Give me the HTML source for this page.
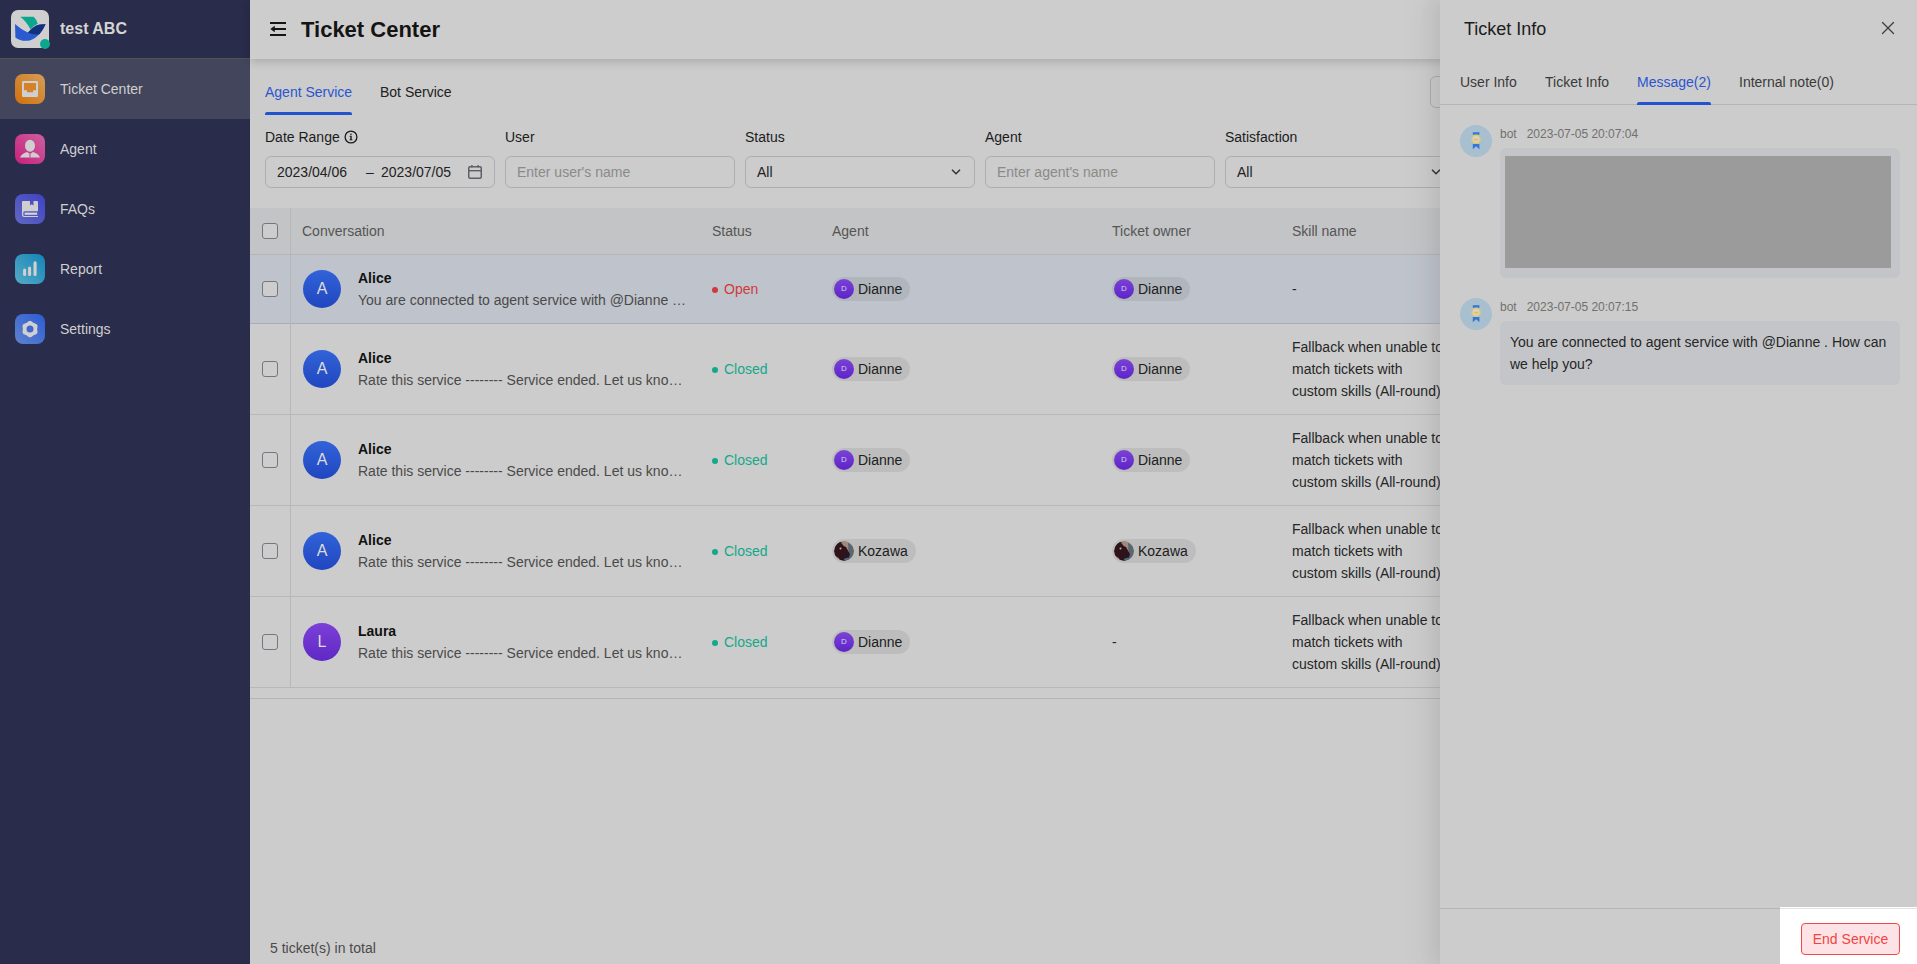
<!DOCTYPE html>
<html><head><meta charset="utf-8">
<style>
*{box-sizing:border-box;margin:0;padding:0}
html,body{width:1917px;height:964px;overflow:hidden;font-family:"Liberation Sans",sans-serif;background:#cccccc;position:relative}
.abs{position:absolute}
#side{position:absolute;left:0;top:0;width:250px;height:964px;background:#292c4a}
#logo{position:absolute;left:11px;top:10px;width:38px;height:38px;border-radius:7px;background:#cfcfcf}
#logodot{position:absolute;left:40px;top:39px;width:10px;height:10px;border-radius:50%;background:#0aa88f}
#brand{position:absolute;left:60px;top:19px;font-size:16px;font-weight:bold;color:#d4d4d4;line-height:20px}
.mi{position:absolute;left:0;width:250px;height:60px}
.mi.act{background:#43455c}
.mi .ic{position:absolute;left:15px;top:15px;width:30px;height:30px;border-radius:8px}
.mi .tx{position:absolute;left:60px;top:22px;font-size:14px;color:#cfcfcf;line-height:16px}
#main{position:absolute;left:250px;top:0;width:1667px;height:964px;background:#cccccc}
#hdr{position:absolute;left:0;top:0;width:1667px;height:59px;background:#cdcdcd;box-shadow:0 3px 9px rgba(0,0,0,0.16)}
#title{position:absolute;left:51px;top:17px;font-size:22px;font-weight:bold;color:#141414;line-height:26px}
.tab{position:absolute;top:84px;font-size:14px;line-height:16px;color:#202020}
.lbl{position:absolute;top:129px;font-size:14px;line-height:16px;color:#1c1c1c}
.inp{position:absolute;top:156px;width:230px;height:32px;border:1px solid #abaeb2;border-radius:6px;background:#cccccc;font-size:14px;line-height:30px;padding-left:11px;color:#8a8a8a}
.inp.v{color:#222}
#thead{position:absolute;left:0;top:208px;width:1190px;height:47px;background:#c3c4c6;border-bottom:1px solid #b5b5b7}
.th{position:absolute;top:15px;font-size:14px;line-height:16px;color:#555}
.cb{position:absolute;width:16px;height:16px;border:1px solid #737880;border-radius:3px;background:#cdcdcd}
.row{position:absolute;left:0;width:1190px;border-bottom:1px solid #b8b8b8}
.row.sel{background:#bfc3cb;border-bottom-color:#a9adb5}
.vdiv{position:absolute;left:40px;top:208px;width:1px;height:479px;background:#b6b7b9}
.av{position:absolute;width:38px;height:38px;border-radius:50%;color:#dcdcdc;font-size:16px;text-align:center;line-height:38px}
.av.b{background:linear-gradient(#3263d8,#2046c0)}
.av.p{background:linear-gradient(#7c40d8,#5f28c4)}
.nm{position:absolute;left:108px;font-size:14px;font-weight:bold;color:#111;line-height:16px}
.msg{position:absolute;left:108px;font-size:14px;color:#4a4a4a;line-height:16px;white-space:nowrap}
.st{position:absolute;left:462px;font-size:14px;line-height:16px}
.st i{display:inline-block;width:6px;height:6px;border-radius:50%;margin-right:6px;vertical-align:1px}
.chip{position:absolute;height:24px;border-radius:12px;background:rgba(0,0,0,0.07);padding:0 8px 0 26px;font-size:14px;line-height:24px;color:#202020}
.chip .ca{position:absolute;left:2px;top:2px;width:20px;height:20px;border-radius:50%;background:linear-gradient(#7a42d6,#5e24c8);color:#d8d0f0;font-size:8px;line-height:20px;text-align:center}
.chip .ca.k{background:none;overflow:hidden}.chip .ca svg{display:block}
.skill{position:absolute;left:1042px;font-size:14px;line-height:22px;color:#262626;white-space:nowrap}
#drawer{position:absolute;left:1440px;top:0;width:477px;height:964px;background:#cccccc;box-shadow:-6px 0 16px 0 rgba(0,0,0,.06),-9px 0 28px 8px rgba(0,0,0,.04)}
.dtab{position:absolute;top:74px;font-size:14px;line-height:16px;color:#3a3a3a}
.botav{position:absolute;left:20px;width:32px;height:32px;border-radius:50%}.botav svg{display:block}
.meta{position:absolute;left:60px;font-size:12px;line-height:14px;color:#707070}
</style></head><body>
<div id="side">
  <div id="logo"><svg width="38" height="38" viewBox="0 0 38 38">
<path d="M9.3 6.8 L22.7 6.8 Q25.5 9.5 26.8 13.8 Q22 15.8 19.5 19.5 Q15.5 11.5 9.3 6.8Z" fill="#0aa68e"/>
<path d="M4 14 Q10 19.5 16.8 22.4 Q21 20 24 16.5 Q29 14 34.6 14.3 Q31.5 21 27.4 25 Q21.5 31 15.5 30.8 Q9 31 4.4 27.4Z" fill="#2a5ad0"/>
<path d="M16.8 22.4 Q21 17.5 25 15.5 Q29.5 13.8 34.6 14.3 Q32 20 28.5 24.2 Q22 25 16.8 22.4Z" fill="#12307c"/>
</svg></div><div id="logodot"></div>
  <div class="abs" style="left:0;top:58px;width:250px;height:1px;background:#525252"></div><div id="brand">test ABC</div>
  <div class="mi act" style="top:59px"><div class="ic" style="background:linear-gradient(45deg,#d0700c,#d59e58)"><svg width="30" height="30" viewBox="0 0 30 30"><rect x="7" y="7" width="16" height="16" rx="1.2" fill="#cfcfcf"/><path d="M9 9H21V16.3H18V18.3H12V16.3H9Z" fill="#d3822a"/></svg></div><div class="tx">Ticket Center</div></div>
  <div class="mi" style="top:119px"><div class="ic" style="background:linear-gradient(45deg,#c8207c,#cc60a0)"><svg width="30" height="30" viewBox="0 0 30 30"><ellipse cx="15" cy="11.8" rx="5" ry="6" fill="#cfcfcf"/><path d="M5 23.6 Q6.5 19.5 12 18 L14.2 19.5 L14.2 23.6Z M25 23.6 Q23.5 19.5 18 18 L15.8 19.5 L15.8 23.6Z" fill="#cfcfcf"/><path d="M14.3 19.6H15.7L15.4 21.5L15.9 23.6H14.1L14.6 21.5Z" fill="#cfcfcf" opacity="0.7"/></svg></div><div class="tx">Agent</div></div>
  <div class="mi" style="top:179px"><div class="ic" style="background:linear-gradient(45deg,#6068c0,#4042c4)"><svg width="30" height="30" viewBox="0 0 30 30"><path d="M7 8Q7 7 8 7H15V11.5L16.7 10.2L18.5 11.5V7H22Q23 7 23 8V17.3H9.6Q8.3 17.3 8.3 18.8V20.9Q8.3 22 9.6 22H23V23H9Q7 23 7 21Z" fill="#cfcfcf"/><rect x="9.6" y="18.6" width="12.6" height="2.2" fill="#d6d6ce"/></svg></div><div class="tx">FAQs</div></div>
  <div class="mi" style="top:239px"><div class="ic" style="background:linear-gradient(45deg,#56aac8,#1484b6)"><svg width="30" height="30" viewBox="0 0 30 30"><rect x="8.1" y="14.5" width="3" height="7.6" rx="1.5" fill="#d4d0cc"/><rect x="13.1" y="12.4" width="3" height="9.7" rx="1.5" fill="#d4d0cc"/><rect x="18.5" y="7.3" width="3.1" height="14.8" rx="1.5" fill="#d4d0cc"/></svg></div><div class="tx">Report</div></div>
  <div class="mi" style="top:299px"><div class="ic" style="background:linear-gradient(45deg,#5e82cc,#2c5cd4)"><svg width="30" height="30" viewBox="0 0 30 30"><path d="M22.15 15.10L22.17 14.72L22.22 14.34L22.29 13.95L22.37 13.53L22.44 13.11L22.48 12.67L22.49 12.22L22.44 11.79L22.33 11.37L22.14 10.98L21.90 10.62L21.59 10.31L21.24 10.05L20.85 9.83L20.44 9.66L20.04 9.50L19.64 9.37L19.26 9.23L18.91 9.08L18.58 8.91L18.26 8.71L17.95 8.47L17.64 8.21L17.33 7.94L16.99 7.66L16.64 7.40L16.26 7.18L15.85 7.00L15.43 6.89L15.00 6.85L14.57 6.89L14.15 7.00L13.74 7.18L13.36 7.40L13.01 7.66L12.67 7.94L12.36 8.21L12.05 8.47L11.74 8.71L11.43 8.91L11.09 9.08L10.74 9.23L10.36 9.37L9.96 9.50L9.56 9.66L9.15 9.83L8.76 10.05L8.41 10.31L8.10 10.62L7.86 10.98L7.67 11.37L7.56 11.79L7.51 12.22L7.52 12.67L7.56 13.11L7.63 13.53L7.71 13.95L7.78 14.34L7.83 14.72L7.85 15.10L7.83 15.48L7.78 15.86L7.71 16.25L7.63 16.67L7.56 17.09L7.52 17.53L7.51 17.98L7.56 18.41L7.67 18.83L7.86 19.22L8.10 19.58L8.41 19.89L8.76 20.15L9.15 20.37L9.56 20.54L9.96 20.70L10.36 20.83L10.74 20.97L11.09 21.12L11.42 21.29L11.74 21.49L12.05 21.73L12.36 21.99L12.67 22.26L13.01 22.54L13.36 22.80L13.74 23.02L14.15 23.20L14.57 23.31L15.00 23.35L15.43 23.31L15.85 23.20L16.26 23.02L16.64 22.80L16.99 22.54L17.33 22.26L17.64 21.99L17.95 21.73L18.26 21.49L18.58 21.29L18.91 21.12L19.26 20.97L19.64 20.83L20.04 20.70L20.44 20.54L20.85 20.37L21.24 20.15L21.59 19.89L21.90 19.58L22.14 19.22L22.33 18.83L22.44 18.41L22.49 17.98L22.48 17.53L22.44 17.09L22.37 16.67L22.29 16.25L22.22 15.86L22.17 15.48Z" fill="#d0d0d0"/><circle cx="15" cy="15.1" r="3.5" fill="#4068cc"/></svg></div><div class="tx">Settings</div></div>
</div>
<div id="main">
  <div id="hdr"><svg class="abs" style="left:20px;top:21px" width="17" height="16" viewBox="0 0 17 16"><rect x="0" y="1" width="16" height="2" fill="#151515"/><rect x="4" y="7" width="12" height="2" fill="#151515"/><path d="M0.3 8 L4.8 4.8 L4.8 11.2Z" fill="#151515"/><rect x="0" y="13" width="16" height="2" fill="#151515"/></svg><div id="title">Ticket Center</div></div>
  <div class="tab" style="left:15px;color:#2b55d0">Agent Service</div>
  <div class="abs" style="left:15px;top:112px;width:87px;height:3px;background:#2252cd;border-radius:2px 2px 0 0"></div>
  <div class="tab" style="left:130px">Bot Service</div>
  <div class="lbl" style="left:15px">Date Range</div><svg class="abs" style="left:94px;top:130px" width="14" height="14" viewBox="0 0 14 14"><circle cx="7" cy="7" r="5.9" stroke="#1a1a1a" stroke-width="1.3" fill="none"/><rect x="6.3" y="5.8" width="1.4" height="4" fill="#1a1a1a"/><rect x="5.6" y="9.3" width="2.8" height="1" fill="#1a1a1a"/><rect x="5.6" y="5.8" width="1.2" height="0.9" fill="#1a1a1a"/><circle cx="7" cy="4.2" r="0.8" fill="#1a1a1a"/></svg>
  <div class="lbl" style="left:255px">User</div>
  <div class="lbl" style="left:495px">Status</div>
  <div class="lbl" style="left:735px">Agent</div>
  <div class="lbl" style="left:975px">Satisfaction</div>
  <div class="inp v" style="left:15px">2023/04/06</div><div class="abs" style="left:116px;top:164px;font-size:14px;line-height:16px;color:#222">–</div><div class="abs" style="left:131px;top:164px;font-size:14px;line-height:16px;color:#222">2023/07/05</div><svg class="abs" style="left:218px;top:165px" width="14" height="14" viewBox="0 0 14 14"><rect x="0.75" y="1.75" width="12.5" height="11.5" rx="1.2" stroke="#5d6066" stroke-width="1.5" fill="none"/><rect x="0.75" y="5" width="12.5" height="1.4" fill="#5d6066"/><rect x="3.2" y="0" width="1.4" height="2.5" fill="#5d6066"/><rect x="9.4" y="0" width="1.4" height="2.5" fill="#5d6066"/></svg>
  <div class="inp" style="left:255px">Enter user's name</div>
  <div class="inp v" style="left:495px">All</div><svg class="abs" style="left:701px;top:168px" width="10" height="8" viewBox="0 0 10 8"><path d="M1 1.8L5 5.8L9 1.8" stroke="#333" stroke-width="1.5" fill="none"/></svg>
  <div class="inp" style="left:735px">Enter agent's name</div>
  <div class="inp v" style="left:975px">All</div><svg class="abs" style="left:1181px;top:168px" width="10" height="8" viewBox="0 0 10 8"><path d="M1 1.8L5 5.8L9 1.8" stroke="#333" stroke-width="1.5" fill="none"/></svg>

  <div id="thead">
    <div class="cb" style="left:12px;top:15px"></div>
    <div class="th" style="left:52px">Conversation</div>
    <div class="th" style="left:462px">Status</div>
    <div class="th" style="left:582px">Agent</div>
    <div class="th" style="left:862px">Ticket owner</div>
    <div class="th" style="left:1042px">Skill name</div>
  </div>
  <div class="abs" style="left:1180px;top:76px;width:120px;height:32px;border:1px solid #abaeb2;border-radius:6px"></div>
<!--ROWS-->
<div class="row sel" style="top:255px;height:69px"><div class="cb" style="left:12px;top:26px"></div><div class="av b" style="left:53px;top:15px">A</div><div class="nm" style="top:15px">Alice</div><div class="msg" style="top:37px">You are connected to agent service with @Dianne …</div><div class="st" style="top:26px;color:#cf3a3a"><i style="background:#cf3a3a"></i>Open</div><div class="chip" style="left:582px;top:22px"><div class="ca">D</div>Dianne</div><div class="chip" style="left:862px;top:22px"><div class="ca">D</div>Dianne</div><div class="skill" style="top:23px">-</div></div>
<div class="row" style="top:324px;height:91px"><div class="cb" style="left:12px;top:37px"></div><div class="av b" style="left:53px;top:26px">A</div><div class="nm" style="top:26px">Alice</div><div class="msg" style="top:48px">Rate this service -------- Service ended. Let us kno…</div><div class="st" style="top:37px;color:#13a88a"><i style="background:#13a88a"></i>Closed</div><div class="chip" style="left:582px;top:33px"><div class="ca">D</div>Dianne</div><div class="chip" style="left:862px;top:33px"><div class="ca">D</div>Dianne</div><div class="skill" style="top:12px">Fallback when unable to<br>match tickets with<br>custom skills (All-round)</div></div>
<div class="row" style="top:415px;height:91px"><div class="cb" style="left:12px;top:37px"></div><div class="av b" style="left:53px;top:26px">A</div><div class="nm" style="top:26px">Alice</div><div class="msg" style="top:48px">Rate this service -------- Service ended. Let us kno…</div><div class="st" style="top:37px;color:#13a88a"><i style="background:#13a88a"></i>Closed</div><div class="chip" style="left:582px;top:33px"><div class="ca">D</div>Dianne</div><div class="chip" style="left:862px;top:33px"><div class="ca">D</div>Dianne</div><div class="skill" style="top:12px">Fallback when unable to<br>match tickets with<br>custom skills (All-round)</div></div>
<div class="row" style="top:506px;height:91px"><div class="cb" style="left:12px;top:37px"></div><div class="av b" style="left:53px;top:26px">A</div><div class="nm" style="top:26px">Alice</div><div class="msg" style="top:48px">Rate this service -------- Service ended. Let us kno…</div><div class="st" style="top:37px;color:#13a88a"><i style="background:#13a88a"></i>Closed</div><div class="chip" style="left:582px;top:33px"><div class="ca k"><svg width="20" height="20" viewBox="0 0 20 20"><defs><clipPath id="kc"><circle cx="10" cy="10" r="10"/></clipPath></defs><g clip-path="url(#kc)"><rect width="20" height="20" fill="#8a7068"/><path d="M8 0H20V20H14Z" fill="#a08a80"/><path d="M14 2Q19 4 20 9V20H15Z" fill="#5c6670"/><path d="M0 4Q4 1 7 2Q9 5 12 6Q14 10 16 13Q15 18 12 20H6Q3 17 0 14Z" fill="#2e141a"/><path d="M0 14Q4 16 7 20H0Z" fill="#b09888"/><path d="M3 0H7Q8 3 6 5Q4 4 3 2Z" fill="#1e1e1e"/><circle cx="6.5" cy="7.5" r="1" fill="#c8b098"/><path d="M10 18Q13 16 16 17L15 20H10Z" fill="#4a6a88"/></g></svg></div>Kozawa</div><div class="chip" style="left:862px;top:33px"><div class="ca k"><svg width="20" height="20" viewBox="0 0 20 20"><defs><clipPath id="kc"><circle cx="10" cy="10" r="10"/></clipPath></defs><g clip-path="url(#kc)"><rect width="20" height="20" fill="#8a7068"/><path d="M8 0H20V20H14Z" fill="#a08a80"/><path d="M14 2Q19 4 20 9V20H15Z" fill="#5c6670"/><path d="M0 4Q4 1 7 2Q9 5 12 6Q14 10 16 13Q15 18 12 20H6Q3 17 0 14Z" fill="#2e141a"/><path d="M0 14Q4 16 7 20H0Z" fill="#b09888"/><path d="M3 0H7Q8 3 6 5Q4 4 3 2Z" fill="#1e1e1e"/><circle cx="6.5" cy="7.5" r="1" fill="#c8b098"/><path d="M10 18Q13 16 16 17L15 20H10Z" fill="#4a6a88"/></g></svg></div>Kozawa</div><div class="skill" style="top:12px">Fallback when unable to<br>match tickets with<br>custom skills (All-round)</div></div>
<div class="row" style="top:597px;height:91px"><div class="cb" style="left:12px;top:37px"></div><div class="av p" style="left:53px;top:26px">L</div><div class="nm" style="top:26px">Laura</div><div class="msg" style="top:48px">Rate this service -------- Service ended. Let us kno…</div><div class="st" style="top:37px;color:#13a88a"><i style="background:#13a88a"></i>Closed</div><div class="chip" style="left:582px;top:33px"><div class="ca">D</div>Dianne</div><div class="skill" style="left:862px;top:34px">-</div><div class="skill" style="top:12px">Fallback when unable to<br>match tickets with<br>custom skills (All-round)</div></div>
<!--/ROWS-->
  <div class="vdiv"></div><div id="tline" class="abs" style="left:0;top:698px;width:1190px;height:1px;background:#b5b5b5"></div>
  <div class="abs" style="left:20px;top:940px;font-size:14px;line-height:16px;color:#4a4a4a">5 ticket(s) in total</div>
</div>
<div id="drawer">
  <div class="abs" style="left:24px;top:19px;font-size:18px;line-height:20px;color:#1c1c1c">Ticket Info</div>
  <svg class="abs" style="left:441px;top:21px" width="14" height="14" viewBox="0 0 14 14"><path d="M1.5 1.5L12.5 12.5M12.5 1.5L1.5 12.5" stroke="#3b3e45" stroke-width="1.3" stroke-linecap="round" fill="none"/></svg>
  <div class="dtab" style="left:20px">User Info</div>
  <div class="dtab" style="left:105px">Ticket Info</div>
  <div class="dtab" style="left:197px;color:#2b55d0">Message(2)</div>
  <div class="dtab" style="left:299px">Internal note(0)</div>
  <div class="abs" style="left:0;top:104px;width:477px;height:1px;background:#b5b5b5"></div>
  <div class="abs" style="left:197px;top:102px;width:74px;height:3px;background:#2252cd;border-radius:2px 2px 0 0"></div>
  <div class="botav" style="top:125px"><svg width="32" height="32" viewBox="0 0 32 32"><circle cx="16" cy="16" r="16" fill="#a8bfcf"/><rect x="12.8" y="7.2" width="6.6" height="2.6" fill="#3378d8"/><path d="M12.8 19H19.4V24.2L16.1 21.2L12.8 24.2Z" fill="#3378d8"/><circle cx="16.1" cy="14.3" r="4.8" fill="#e0c870"/><circle cx="16.1" cy="14.3" r="3.3" fill="#d8d4cc"/><path d="M13.8 15.4L14.4 13.2L15.4 14.3L16.1 12.8L16.8 14.3L17.8 13.2L18.4 15.4Z" fill="#e0c060"/></svg></div>
  <div class="meta" style="top:127px">bot<span style="margin-left:10px">2023-07-05 20:07:04</span></div>
  <div class="abs" style="left:60px;top:148px;width:400px;height:130px;background:#c4c5c8;border-radius:6px"></div>
  <div class="abs" style="left:65px;top:156px;width:386px;height:112px;background:#9b9b9b"></div>
  <div class="botav" style="top:298px"><svg width="32" height="32" viewBox="0 0 32 32"><circle cx="16" cy="16" r="16" fill="#a8bfcf"/><rect x="12.8" y="7.2" width="6.6" height="2.6" fill="#3378d8"/><path d="M12.8 19H19.4V24.2L16.1 21.2L12.8 24.2Z" fill="#3378d8"/><circle cx="16.1" cy="14.3" r="4.8" fill="#e0c870"/><circle cx="16.1" cy="14.3" r="3.3" fill="#d8d4cc"/><path d="M13.8 15.4L14.4 13.2L15.4 14.3L16.1 12.8L16.8 14.3L17.8 13.2L18.4 15.4Z" fill="#e0c060"/></svg></div>
  <div class="meta" style="top:300px">bot<span style="margin-left:10px">2023-07-05 20:07:15</span></div>
  <div class="abs" style="left:60px;top:321px;width:400px;height:64px;background:#c4c5c8;border-radius:6px;padding:10px 10px 0 10px;font-size:14px;line-height:22px;color:#262626">You are connected to agent service with @Dianne . How can we help you?</div>
  <div class="abs" style="left:0;top:908px;width:477px;height:1px;background:#b5b5b5"></div>
</div>
<div class="abs" style="left:1780px;top:907px;width:137px;height:57px;background:#ffffff"></div><div class="abs" style="left:1780px;top:908px;width:137px;height:1px;background:#e1e3e6"></div>
<div class="abs" style="left:1801px;top:923px;width:99px;height:32px;border:1px solid #f24848;border-radius:4px;background:#fde3e5;color:#f04444;font-size:14px;line-height:30px;text-align:center">End Service</div>
</body></html>
